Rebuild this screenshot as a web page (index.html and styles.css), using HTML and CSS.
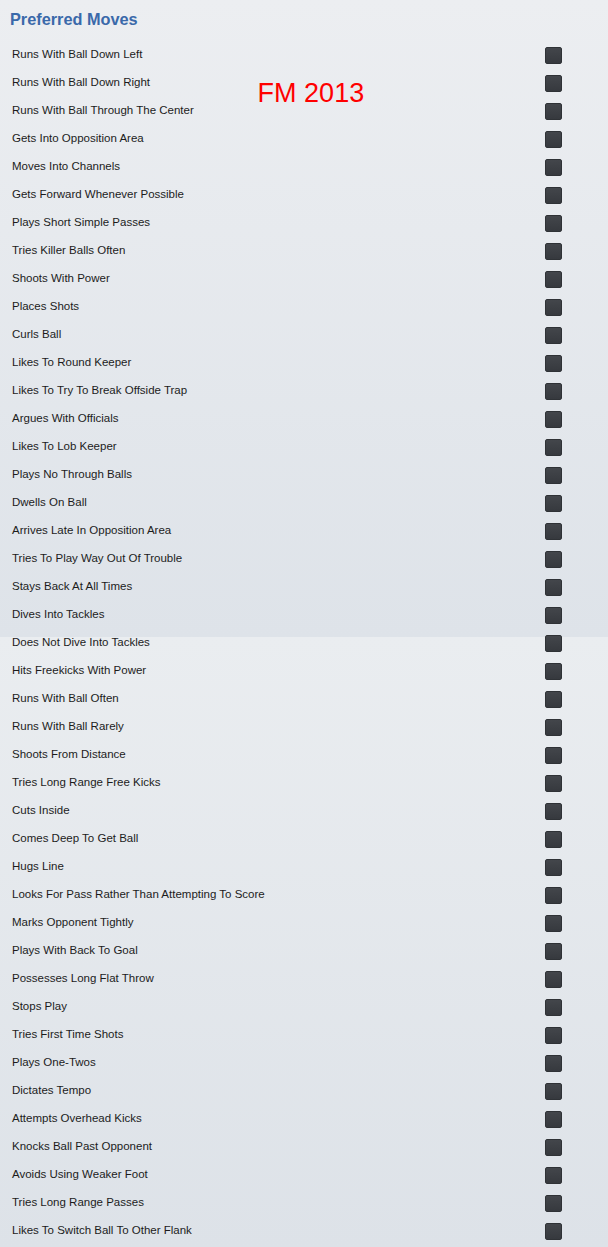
FILE: index.html
```html
<!DOCTYPE html>
<html lang="en">
<head>
  <meta charset="UTF-8" />
  <title>Preferred Moves</title>
  <link rel="stylesheet" href="styles.css">
</head>
<body>
  <div class="panel">
    <div class="header">
      <h1>Preferred Moves</h1>
      <div class="stamp">FM 2013</div>
    </div>

    <ul class="moves">
      <li><span>Runs With Ball Down Left</span><i class="box"></i></li>
      <li><span>Runs With Ball Down Right</span><i class="box"></i></li>
      <li><span>Runs With Ball Through The Center</span><i class="box"></i></li>
      <li><span>Gets Into Opposition Area</span><i class="box"></i></li>
      <li><span>Moves Into Channels</span><i class="box"></i></li>
      <li><span>Gets Forward Whenever Possible</span><i class="box"></i></li>
      <li><span>Plays Short Simple Passes</span><i class="box"></i></li>
      <li><span>Tries Killer Balls Often</span><i class="box"></i></li>
      <li><span>Shoots With Power</span><i class="box"></i></li>
      <li><span>Places Shots</span><i class="box"></i></li>
      <li><span>Curls Ball</span><i class="box"></i></li>
      <li><span>Likes To Round Keeper</span><i class="box"></i></li>
      <li><span>Likes To Try To Break Offside Trap</span><i class="box"></i></li>
      <li><span>Argues With Officials</span><i class="box"></i></li>
      <li><span>Likes To Lob Keeper</span><i class="box"></i></li>
      <li><span>Plays No Through Balls</span><i class="box"></i></li>
      <li><span>Dwells On Ball</span><i class="box"></i></li>
      <li><span>Arrives Late In Opposition Area</span><i class="box"></i></li>
      <li><span>Tries To Play Way Out Of Trouble</span><i class="box"></i></li>
      <li><span>Stays Back At All Times</span><i class="box"></i></li>
      <li><span>Dives Into Tackles</span><i class="box"></i></li>
      <li><span>Does Not Dive Into Tackles</span><i class="box"></i></li>
      <li><span>Hits Freekicks With Power</span><i class="box"></i></li>
      <li><span>Runs With Ball Often</span><i class="box"></i></li>
      <li><span>Runs With Ball Rarely</span><i class="box"></i></li>
      <li><span>Shoots From Distance</span><i class="box"></i></li>
      <li><span>Tries Long Range Free Kicks</span><i class="box"></i></li>
      <li><span>Cuts Inside</span><i class="box"></i></li>
      <li><span>Comes Deep To Get Ball</span><i class="box"></i></li>
      <li><span>Hugs Line</span><i class="box"></i></li>
      <li><span>Looks For Pass Rather Than Attempting To Score</span><i class="box"></i></li>
      <li><span>Marks Opponent Tightly</span><i class="box"></i></li>
      <li><span>Plays With Back To Goal</span><i class="box"></i></li>
      <li><span>Possesses Long Flat Throw</span><i class="box"></i></li>
      <li><span>Stops Play</span><i class="box"></i></li>
      <li><span>Tries First Time Shots</span><i class="box"></i></li>
      <li><span>Plays One-Twos</span><i class="box"></i></li>
      <li><span>Dictates Tempo</span><i class="box"></i></li>
      <li><span>Attempts Overhead Kicks</span><i class="box"></i></li>
      <li><span>Knocks Ball Past Opponent</span><i class="box"></i></li>
      <li><span>Avoids Using Weaker Foot</span><i class="box"></i></li>
      <li><span>Tries Long Range Passes</span><i class="box"></i></li>
      <li><span>Likes To Switch Ball To Other Flank</span><i class="box"></i></li>
    </ul>
  </div>
</body>
</html>
```

FILE: styles.css
```css
html, body {
  margin: 0;
  padding: 0;
}

body {
  width: 608px;
  min-height: 1247px;
  font-family: "Liberation Sans", Arial, sans-serif;
  color: #1c1c1c;
  /* two stitched screenshots, each with its own gradient */
  background: linear-gradient(to bottom,
    #eceef1 0px,
    #dee3e9 637px,
    #eaedf0 637px,
    #dde2e8 1247px);
}

.panel {
  width: 608px;
}

.header {
  display: flex;
  height: 40px;
  padding-left: 10px;
  box-sizing: border-box;
}

h1 {
  margin: 0;
  padding-top: 10px;
  font-size: 16.3px;
  font-weight: bold;
  color: #3a69aa;
}

.stamp {
  margin: 78px 0 0 120px;
  font-size: 27px;
  color: #ff0000;
  white-space: nowrap;
  height: 0;
  line-height: 31px;
}

.moves {
  list-style: none;
  margin: 0;
  padding: 0;
}

.moves li {
  display: flex;
  align-items: center;
  justify-content: space-between;
  height: 28px;
  padding: 0 46px 0 12px;
  font-size: 11.5px;
}

.box {
  width: 17px;
  height: 17px;
  margin-top: 2px;
  box-sizing: border-box;
  border: 1px solid #2f3236;
  border-radius: 2px;
  background: linear-gradient(to bottom, #43464b, #36393e);
}
```
